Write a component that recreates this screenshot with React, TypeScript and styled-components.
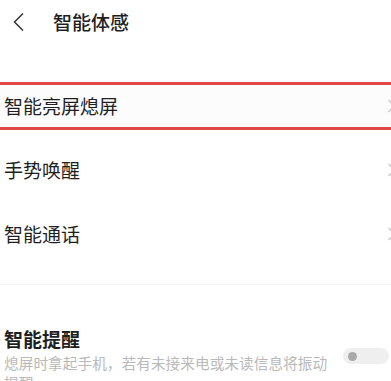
import { FC } from 'react';
import styled, { createGlobalStyle } from 'styled-components';

const colors = {
  text: '#1f1f1f',
  muted: '#b9b9b9',
  arrow: '#c9c9c9',
  mark: '#e04848',
  divider: '#f4f4f4',
  track: '#efefef',
  knob: '#a9a9a9',
};

const GlobalStyle = createGlobalStyle`
  html, body {
    margin: 0;
    padding: 0;
    background: #ffffff;
    overflow: hidden;
  }

  body {
    font-family: 'Noto Sans CJK SC', 'Noto Sans', sans-serif;
    color: ${colors.text};
  }
`;

const items = [
  { label: '智能亮屏熄屏', highlighted: true },
  { label: '手势唤醒', highlighted: false },
  { label: '智能通话', highlighted: false },
];

const App: FC = () => (
  <Page>
    <GlobalStyle />
    <Header>
      <BackIcon width="13" height="20" viewBox="0 0 13 20">
        <path d="M11 1.5 L2.5 10 L11 18.5" fill="none" stroke="#333" strokeWidth="1.5" />
      </BackIcon>
      <Title>智能体感</Title>
    </Header>

    <List>
      {items.map((item) => (
        <Row key={item.label}>
          <Cell $highlighted={item.highlighted}>
            <Label>{item.label}</Label>
            <Arrow width="9" height="14" viewBox="0 0 9 14">
              <path d="M1.5 1 L7.5 7 L1.5 13" fill="none" stroke={colors.arrow} strokeWidth="1.4" />
            </Arrow>
          </Cell>
        </Row>
      ))}
    </List>

    <Divider />

    <Reminder>
      <ReminderText>
        <ReminderTitle>智能提醒</ReminderTitle>
        <Description>熄屏时拿起手机，若有未接来电或未读信息将振动提醒</Description>
      </ReminderText>
      <Toggle>
        <Knob />
      </Toggle>
    </Reminder>
  </Page>
);

export default App;

const Page = styled.div`
  width: 391px;
  height: 381px;
  overflow: hidden;
`;

const Header = styled.header`
  display: flex;
  align-items: center;
  height: 43px;
  padding-left: 12px;
`;

const BackIcon = styled.svg`
  flex-shrink: 0;
`;

const Title = styled.h1`
  margin: 0 0 0 28px;
  font-size: 19px;
  font-weight: 500;
  line-height: 26px;
  color: ${colors.text};
`;

const List = styled.div`
  margin-top: 31px;
`;

const Row = styled.div`
  display: flex;
  align-items: center;
  height: 64px;
`;

const Cell = styled.div<{ $highlighted: boolean }>`
  display: flex;
  flex: 1;
  align-items: center;
  justify-content: space-between;
  height: 42px;
  padding-left: 4px;
  border-top: 3px solid ${({ $highlighted }) => ($highlighted ? colors.mark : 'transparent')};
  border-bottom: 3px solid ${({ $highlighted }) => ($highlighted ? colors.mark : 'transparent')};
  background: ${({ $highlighted }) => ($highlighted ? '#fcfcfc' : 'transparent')};
`;

const Label = styled.span`
  font-size: 19px;
  font-weight: 400;
  line-height: 26px;
`;

const Arrow = styled.svg`
  flex-shrink: 0;
  margin-right: -5px;
`;

const Divider = styled.div`
  height: 1px;
  margin-top: 18px;
  background: ${colors.divider};
`;

const Reminder = styled.section`
  display: flex;
  align-items: flex-start;
  padding: 41px 0 0 4px;
`;

const ReminderText = styled.div`
  width: 330px;
`;

const ReminderTitle = styled.h2`
  margin: 0;
  font-size: 19px;
  font-weight: 600;
  line-height: 26px;
`;

const Description = styled.p`
  margin: 1px 0 0;
  font-size: 14.7px;
  line-height: 20px;
  color: ${colors.muted};
`;

const Toggle = styled.div`
  display: flex;
  align-items: center;
  flex-shrink: 0;
  width: 46px;
  height: 16px;
  margin: 22px 0 0 9px;
  padding-left: 5px;
  box-sizing: border-box;
  border-radius: 8px;
  background: ${colors.track};
`;

const Knob = styled.div`
  width: 9px;
  height: 9px;
  border-radius: 50%;
  background: ${colors.knob};
`;
